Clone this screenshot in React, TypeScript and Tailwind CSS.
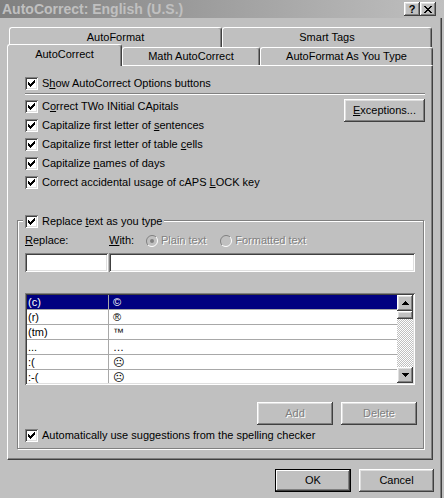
import React from "react";

const sunken =
  "shadow-[inset_1px_1px_#808080,inset_-1px_-1px_#ffffff,inset_2px_2px_#404040,inset_-2px_-2px_#dfdfdf]";
const raised =
  "shadow-[inset_-1px_-1px_#404040,inset_1px_1px_#ffffff,inset_-2px_-2px_#808080,inset_2px_2px_#dfdfdf]";

function CheckMark() {
  const starts = [2, 3, 4, 3, 2, 1, 0];
  return (
    <svg width="13" height="13" viewBox="0 0 13 13" shapeRendering="crispEdges" className="block">
      {starts.map((s, i) => (
        <rect key={i} x={3 + i} y={3 + s} width="1" height="3" fill="#000" />
      ))}
    </svg>
  );
}

function Check() {
  return (
    <span className={`block w-[13px] h-[13px] shrink-0 bg-white ${sunken}`}>
      <CheckMark />
    </span>
  );
}

function CheckRow({ children }: { children: React.ReactNode }) {
  return (
    <div className="flex items-center h-[13px] gap-[4px] whitespace-nowrap">
      <Check />
      <span className="leading-[13px]">{children}</span>
    </div>
  );
}

function Radio({ on }: { on?: boolean }) {
  return (
    <svg width="12" height="12" viewBox="0 0 12 12" className="block shrink-0">
      <circle cx="6" cy="6" r="5.5" fill="#c0c0c0" />
      <path d="M10 2 A5.66 5.66 0 0 0 2 10" stroke="#808080" fill="none" />
      <path d="M2 10 A5.66 5.66 0 0 0 10 2" stroke="#ffffff" fill="none" />
      {on && <circle cx="6" cy="6" r="2" fill="#808080" />}
    </svg>
  );
}

function Tab({
  w,
  children,
  selected,
  h = "h-[20px]",
}: {
  w: string;
  children: React.ReactNode;
  selected?: boolean;
  h?: string;
}) {
  return (
    <div
      className={`${w} ${selected ? "h-[22px] -mt-[3px] relative z-10 pb-[2px]" : h} shrink-0 bg-[#c0c0c0] border-l border-t border-white border-r border-r-[#404040] rounded-t-[3px] shadow-[inset_-1px_0_#808080] flex items-center justify-center whitespace-nowrap`}
    >
      {children}
    </div>
  );
}

function ArrowUp() {
  return (
    <svg width="7" height="4" viewBox="0 0 7 4" shapeRendering="crispEdges" className="block">
      <rect x="3" y="0" width="1" height="1" fill="#000" />
      <rect x="2" y="1" width="3" height="1" fill="#000" />
      <rect x="1" y="2" width="5" height="1" fill="#000" />
      <rect x="0" y="3" width="7" height="1" fill="#000" />
    </svg>
  );
}

function ArrowDown() {
  return (
    <svg width="7" height="4" viewBox="0 0 7 4" shapeRendering="crispEdges" className="block">
      <rect x="0" y="0" width="7" height="1" fill="#000" />
      <rect x="1" y="1" width="5" height="1" fill="#000" />
      <rect x="2" y="2" width="3" height="1" fill="#000" />
      <rect x="3" y="3" width="1" height="1" fill="#000" />
    </svg>
  );
}

function CloseGlyph() {
  const rows: [number, number][][] = [
    [[0, 2], [6, 2]],
    [[1, 2], [5, 2]],
    [[2, 4]],
    [[3, 2]],
    [[2, 4]],
    [[1, 2], [5, 2]],
    [[0, 2], [6, 2]],
  ];
  return (
    <svg width="8" height="7" viewBox="0 0 8 7" shapeRendering="crispEdges" className="block">
      {rows.map((r, y) =>
        r.map(([x, w], i) => <rect key={`${y}-${i}`} x={x} y={y} width={w} height="1" fill="#000" />)
      )}
    </svg>
  );
}

const entries: [string, string][] = [
  ["(c)", "©"],
  ["(r)", "®"],
  ["(tm)", "™"],
  ["...", "…"],
  [":(", "☹"],
  [":-(", "☹"],
];

export default function App() {
  return (
    <div className="w-[444px] h-[498px] overflow-hidden bg-[#c0c0c0] text-black text-[11px] leading-[13px] font-['Liberation_Sans','DejaVu_Sans',sans-serif]">
      {/* Title bar */}
      <div className="h-[18px] flex items-center bg-linear-to-r from-[#808080] to-[#c0c0c0]">
        <span className="pl-[2px] text-[14px] font-bold text-[#c0c0c0] leading-[16px] whitespace-nowrap">
          AutoCorrect: English (U.S.)
        </span>
        <div className="ml-auto mr-[8px] flex">
          <div className={`w-[16px] h-[14px] bg-[#c0c0c0] ${raised} flex items-center justify-center text-[11px] font-bold leading-[11px]`}>
            ?
          </div>
          <div className={`w-[16px] h-[14px] bg-[#c0c0c0] ${raised} flex items-center justify-center`}>
            <CloseGlyph />
          </div>
        </div>
      </div>

      {/* Body */}
      <div className="w-[442px] h-[480px] pt-[9px] pl-[7px] border-r border-r-[#404040] shadow-[inset_-1px_0_#808080]">
        {/* Tabs */}
        <div className="flex pl-[2px]">
          <Tab w="w-[213px]">AutoFormat</Tab>
          <Tab w="w-[210px]">Smart Tags</Tab>
        </div>
        <div className="flex items-start h-[18px]">
          <Tab w="w-[115px]" selected>
            AutoCorrect
          </Tab>
          <Tab w="w-[138px]" h="h-[18px]">
            Math AutoCorrect
          </Tab>
          <Tab w="w-[173px]" h="h-[18px]">
            AutoFormat As You Type
          </Tab>
        </div>

        {/* Panel */}
        <div className="w-[426px] h-[395px] border border-white border-r-[#404040] border-b-[#404040] shadow-[inset_-1px_-1px_#808080] pt-[11px] pl-[9px] flex flex-col">
          <div className="pl-[8px]">
            <CheckRow>
              S<u>h</u>ow AutoCorrect Options buttons
            </CheckRow>
          </div>
          <div className="ml-[8px] mt-[3px] w-[400px] h-[2px] border-t border-t-[#808080] border-b border-b-white" />

          <div className="ml-[8px] mt-[5px] w-[400px] flex justify-between items-start">
            <div className="flex flex-col gap-[6px]">
              <CheckRow>
                C<u>o</u>rrect TWo INitial CApitals
              </CheckRow>
              <CheckRow>
                Capitalize first letter of <u>s</u>entences
              </CheckRow>
              <CheckRow>
                Capitalize first letter of table <u>c</u>ells
              </CheckRow>
              <CheckRow>
                Capitalize <u>n</u>ames of days
              </CheckRow>
              <CheckRow>
                Correct accidental usage of cAPS <u>L</u>OCK key
              </CheckRow>
            </div>
            <div className={`-mt-[1px] w-[81px] h-[23px] bg-[#c0c0c0] ${raised} flex items-center justify-center`}>
              <span>
                <u>E</u>xceptions...
              </span>
            </div>
          </div>

          {/* Group box */}
          <div className="mt-[31px] w-[407px] h-[229px] relative border border-[#808080] shadow-[inset_1px_1px_#ffffff,1px_1px_#ffffff] pl-[7px] pt-[13px]">
            <div className="absolute -top-[6px] left-[5px] px-[2px] bg-[#c0c0c0]">
              <CheckRow>
                Replace <u>t</u>ext as you type
              </CheckRow>
            </div>

            <div className="flex items-center h-[13px] whitespace-nowrap">
              <span className="w-[84px]">
                <u>R</u>eplace:
              </span>
              <span className="w-[37px]">
                <u>W</u>ith:
              </span>
              <div className="flex items-center gap-[3px] text-[#808080] [text-shadow:1px_1px_0_#ffffff]">
                <Radio on />
                <span>Plain text</span>
              </div>
              <div className="ml-[14px] flex items-center gap-[3px] text-[#808080] [text-shadow:1px_1px_0_#ffffff]">
                <Radio />
                <span>Formatted text</span>
              </div>
            </div>

            <div className="mt-[6px] flex gap-[1px]">
              <div className={`w-[83px] h-[19px] bg-white ${sunken}`} />
              <div className={`w-[306px] h-[19px] bg-white ${sunken}`} />
            </div>

            {/* List */}
            <div className={`mt-[21px] w-[390px] h-[92px] bg-white ${sunken} p-[2px] flex`}>
              <div className="flex-1 overflow-hidden">
                {entries.map(([a, b], i) => (
                  <div
                    key={i}
                    className={`flex h-[15px] border-b border-b-[#a8a8a8] ${i === 0 ? "bg-[#000080] text-white" : ""}`}
                  >
                    <div className="w-[82px] pl-[1px] border-r border-r-[#a8a8a8] flex items-center whitespace-nowrap">
                      {a}
                    </div>
                    <div className="flex-1 pl-[4px] flex items-center whitespace-nowrap">{b}</div>
                  </div>
                ))}
              </div>
              <div className="w-[16px] flex flex-col">
                <div className={`h-[16px] bg-[#c0c0c0] ${raised} flex items-center justify-center`}>
                  <ArrowUp />
                </div>
                <div className={`h-[8px] bg-[#c0c0c0] ${raised}`} />
                <div className="flex-1 bg-[repeating-conic-gradient(#c0c0c0_0_25%,#ffffff_0_50%)] bg-[length:2px_2px]" />
                <div className={`h-[16px] bg-[#c0c0c0] ${raised} flex items-center justify-center`}>
                  <ArrowDown />
                </div>
              </div>
            </div>

            <div className="mt-[17px] w-[392px] flex justify-end gap-[8px]">
              <div className={`w-[76px] h-[23px] bg-[#c0c0c0] ${raised} flex items-center justify-center text-[#808080] [text-shadow:1px_1px_0_#ffffff]`}>
                Add
              </div>
              <div className={`w-[76px] h-[23px] bg-[#c0c0c0] ${raised} flex items-center justify-center text-[#808080] [text-shadow:1px_1px_0_#ffffff]`}>
                Delete
              </div>
            </div>

            <div className="mt-[4px]">
              <CheckRow>Automatically use suggestions from the spelling checker</CheckRow>
            </div>
          </div>
        </div>

        {/* Dialog buttons */}
        <div className="mt-[9px] ml-[268px] flex gap-[8px]">
          <div className={`w-[76px] h-[23px] bg-[#c0c0c0] border border-black shadow-[inset_-1px_-1px_#404040,inset_1px_1px_#ffffff,inset_-2px_-2px_#808080] flex items-center justify-center`}>
            OK
          </div>
          <div className={`w-[75px] h-[23px] bg-[#c0c0c0] ${raised} flex items-center justify-center`}>
            Cancel
          </div>
        </div>
      </div>
    </div>
  );
}
